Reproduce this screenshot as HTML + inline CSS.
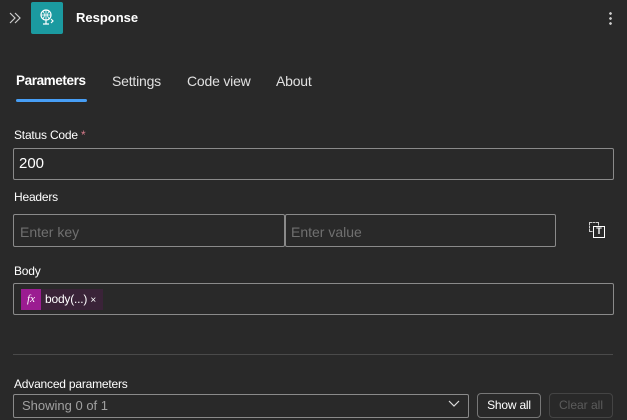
<!DOCTYPE html>
<html><head><meta charset="utf-8"><style>
*{margin:0;padding:0;box-sizing:border-box}
body{width:627px;height:420px;background:#292929;font-family:"Liberation Sans",sans-serif;color:#fff;position:relative;overflow:hidden}
.a{position:absolute}
.lbl{font-size:12px;color:#fff;letter-spacing:-0.2px}
.inp{border:1px solid #8a8a8a;border-radius:2px;background:#292929}
.ph{color:#707070;font-size:14px}
.tab{font-size:14px;color:#e0e0e0;top:73px;letter-spacing:-0.2px}
</style></head><body>
<svg class="a" style="left:8px;top:12px" width="14" height="12" viewBox="0 0 14 12"><path d="M2 1l5 5-5 5M7 1l5 5-5 5" fill="none" stroke="#ccc" stroke-width="1.2"/></svg>
<div class="a" style="left:31px;top:2px;width:32px;height:32px;background:#1b9aa0;border-radius:2px"></div>
<svg class="a" style="left:38px;top:8px" width="18" height="20" viewBox="0 0 18 20"><circle cx="8" cy="7" r="5" fill="none" stroke="#fff" stroke-width="1.2"/><path d="M3 7h10M8 2v10M5 3.5q3 3.5 0 7M11 3.5q-3 3.5 0 7" fill="none" stroke="#fff" stroke-width="0.8"/><path d="M8 12v4M5 16h6M13 11l2 2-2 2" fill="none" stroke="#fff" stroke-width="1.2"/></svg>
<div class="a" style="left:76px;top:10px;font-size:13px;font-weight:bold">Response</div>
<div class="a" style="left:609px;top:11px;width:3px;height:14px;background:radial-gradient(circle,#ccc 1.2px,transparent 1.5px) 0 0/3px 5px"></div>
<div class="a tab" style="left:16px;font-weight:bold;color:#fff;font-size:13.5px;letter-spacing:-0.4px">Parameters</div>
<div class="a" style="left:16px;top:99px;width:71px;height:3px;background:#479ef5;border-radius:2px"></div>
<div class="a tab" style="left:112px">Settings</div>
<div class="a tab" style="left:187px">Code view</div>
<div class="a tab" style="left:276px">About</div>
<div class="a lbl" style="left:14px;top:128px">Status Code <span style="color:#d67a8a">*</span></div>
<div class="a inp" style="left:13px;top:148px;width:601px;height:32px"></div>
<div class="a" style="left:19px;top:155px;font-size:15px">200</div>
<div class="a lbl" style="left:14px;top:190px">Headers</div>
<div class="a inp" style="left:13px;top:214px;width:272px;height:33px"></div>
<div class="a ph" style="left:20px;top:224px">Enter key</div>
<div class="a inp" style="left:285px;top:214px;width:271px;height:33px"></div>
<div class="a ph" style="left:291px;top:224px">Enter value</div>
<div class="a" style="left:589px;top:222px;width:10px;height:10px;border:1px dashed #ccc"></div>
<div class="a" style="left:593px;top:226px;width:12px;height:12px;border:1.5px solid #fff;background:#292929;font-size:9px;font-weight:bold;text-align:center;line-height:9px">T</div>
<div class="a lbl" style="left:14px;top:264px">Body</div>
<div class="a inp" style="left:13px;top:283px;width:601px;height:32px"></div>
<div class="a" style="left:21px;top:289px;width:82px;height:21px;background:#3a2338"></div>
<div class="a" style="left:21px;top:289px;width:20px;height:21px;background:#9b1c91;font-family:'Liberation Serif',serif;font-style:italic;font-size:11px;text-align:center;line-height:21px">fx</div>
<div class="a" style="left:45px;top:292px;font-size:12px;letter-spacing:-0.2px">body(...) <span style="font-size:10px">×</span></div>
<div class="a" style="left:13px;top:354px;width:600px;height:1px;background:#4a4a4a"></div>
<div class="a lbl" style="left:14px;top:377px">Advanced parameters</div>
<div class="a inp" style="left:13px;top:394px;width:456px;height:24px"></div>
<div class="a" style="left:22px;top:398px;font-size:13px;color:#a0a0a0">Showing 0 of 1</div>
<svg class="a" style="left:448px;top:400px" width="12" height="8" viewBox="0 0 12 8"><path d="M1 1l5 5 5-5" fill="none" stroke="#ddd" stroke-width="1.2"/></svg>
<div class="a" style="left:477px;top:393px;width:64px;height:25px;border:1px solid #777;border-radius:4px;font-size:12px;text-align:center;line-height:23px;letter-spacing:-0.2px">Show all</div>
<div class="a" style="left:549px;top:393px;width:64px;height:25px;border:1px solid #444;border-radius:4px;font-size:12px;color:#5c5c5c;text-align:center;line-height:23px">Clear all</div>
</body></html>
